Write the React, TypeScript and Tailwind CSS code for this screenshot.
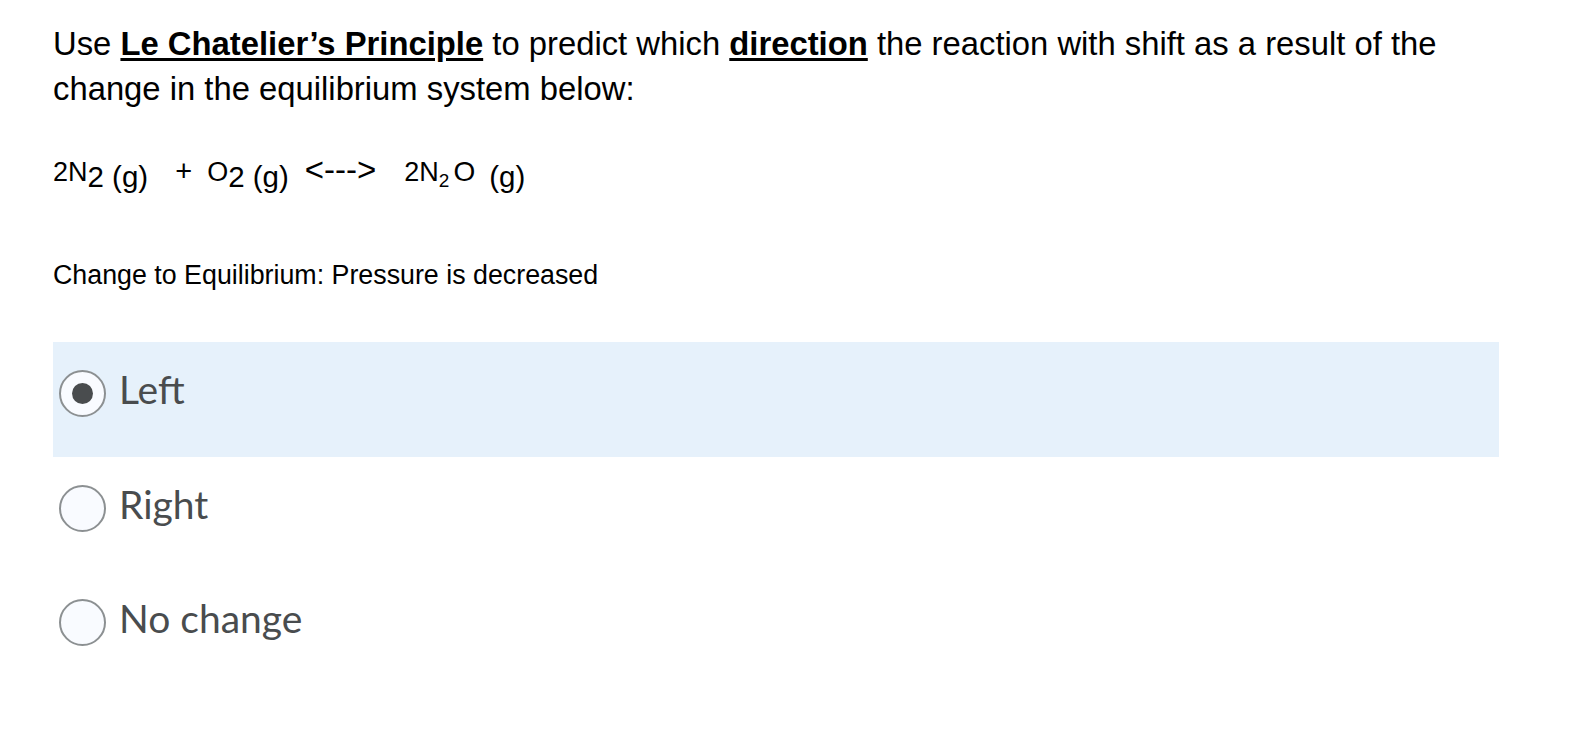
import type { ReactNode } from "react";

interface ChoiceProps {
  label: string;
  selected?: boolean;
}

function Choice({ label, selected = false }: ChoiceProps) {
  return (
    <div className={`flex h-[114px] items-start gap-[13px] pl-[6px] pt-[28px] ${selected ? "h-[115px] bg-[#e6f1fb]" : ""}`}>
      <span className="flex h-[47px] w-[47px] shrink-0 items-center justify-center rounded-full border-2 border-[#8c9092] bg-[#f9fbff]">
        {selected && <span className="h-[21px] w-[21px] rounded-full bg-[#494c4e]" />}
      </span>
      <span className="font-['Lato',sans-serif] text-[39px] leading-[38px] text-[#494c4e]">{label}</span>
    </div>
  );
}

function Sub({ children, className = "" }: { children: ReactNode; className?: string }) {
  return <span className={`align-[-6px] ${className}`}>{children}</span>;
}

export default function App() {
  return (
    <div className="min-h-screen bg-white pl-[53px] pr-[83px] pt-[21px] font-['Liberation_Sans',Arial,sans-serif] text-black">
      <p className="text-[32.8px] leading-[45px]">
        Use <span className="font-bold underline underline-offset-[3px]">Le Chatelier’s Principle</span> to predict which{" "}
        <span className="font-bold underline underline-offset-[3px]">direction</span> the reaction with shift as a result of the change in the
        equilibrium system below:
      </p>

      <p className="mt-[39px] whitespace-nowrap text-[27px] leading-[40px]">
        <span>2N</span>
        <Sub className="text-[29.5px]">2 (g)</Sub>
        <span className="ml-[27px] text-[29px]">+</span>
        <span className="ml-[15px]">O</span>
        <Sub className="text-[29.5px]">2 (g)</Sub>
        <span className="ml-[16px] text-[33px]">&lt;---&gt;</span>
        <span className="ml-[28px]">2N</span>
        <Sub className="text-[19px] align-[-4px]">2</Sub>
        <span className="ml-[4px] text-[28px]">O</span>
        <Sub className="ml-[14px] text-[29.5px]">(g)</Sub>
      </p>

      <p className="mt-[59px] text-[26.8px] leading-[30px]">Change to Equilibrium: Pressure is decreased</p>

      <div className="mt-[52px] w-[1446px]">
        <Choice label="Left" selected />
        <Choice label="Right" />
        <Choice label="No change" />
      </div>
    </div>
  );
}
